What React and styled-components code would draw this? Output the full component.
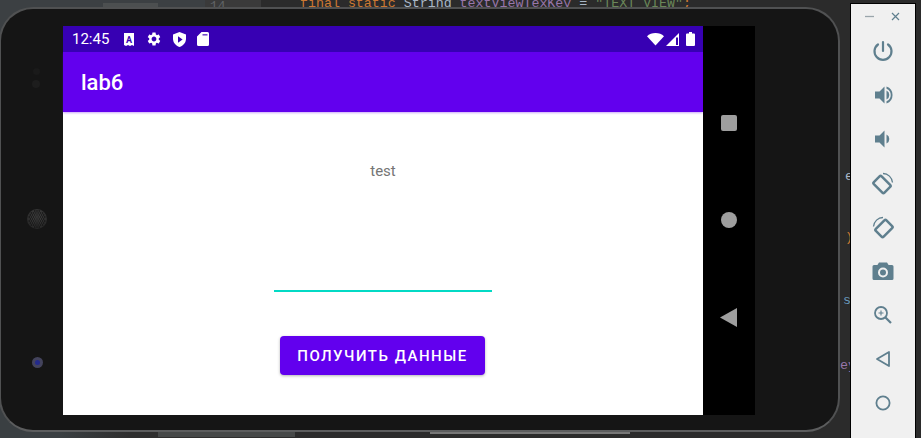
import React from "react"
import styled, { createGlobalStyle } from "styled-components"

const GlobalStyle = createGlobalStyle`
  html, body {
    margin: 0;
    padding: 0;
    background: #2b2b2b;
    overflow: hidden;
  }
`

const Page = styled.div`
  position: relative;
  width: 921px;
  height: 438px;
  overflow: hidden;
  display: flex;
  font-family: Roboto, "Liberation Sans", sans-serif;
`

const ProjectPane = styled.div`
  width: 205px;
  background:
    linear-gradient(to bottom, #3c4043 0 50%, transparent 50%),
    linear-gradient(to right, #3a3f42 60px, #2e2e2e 130px);
`

const Gutter = styled.div`
  width: 56px;
  background: linear-gradient(to bottom, #3a3a3a 0 50%, #2e2e2e 50%);
  box-sizing: border-box;
  font: 13px/13px "Liberation Mono", monospace;
  color: #606366;
  padding-left: 5px;
`

const Code = styled.div`
  flex: 1;
  background: #2b2b2b;
  font: 13.3px/13px "Liberation Mono", monospace;
  color: #a9b7c6;
  white-space: pre;
  overflow: hidden;
`

const CodeLine = styled.div`
  margin-top: -3px;
  padding-left: 39px;
`

const Keyword = styled.span`
  color: #cc7832;
`

const Field = styled.span`
  color: #9876aa;
`

const Str = styled.span`
  color: #6a8759;
`

const Peek = styled.span`
  position: absolute;
  left: ${p => p.$x}px;
  top: ${p => p.$y}px;
  font: 13.3px/14px "Liberation Mono", monospace;
  color: ${p => p.$color};
`

const Key = styled.div`
  position: absolute;
  left: ${p => p.$x}px;
  top: ${p => p.$y}px;
  width: ${p => p.$w}px;
  height: ${p => p.$h}px;
  background: ${p => p.$bg};
`

const Device = styled.div`
  position: absolute;
  left: -1px;
  top: 7px;
  width: 841px;
  height: 425px;
  box-sizing: border-box;
  padding: 17px 0 0 62px;
  display: flex;
  align-items: flex-start;
  background: #151515;
  border: 2px solid #505152;
  border-bottom-color: #5c5d5e;
  border-radius: 34px;
`

const Screen = styled.div`
  width: 640px;
  height: 389px;
  display: flex;
  flex-direction: column;
  background: #fff;
`

const StatusBar = styled.div`
  height: 26px;
  flex: none;
  display: flex;
  align-items: center;
  padding: 0 8px 0 9px;
  background: #3700b3;
  color: #fff;
  font-size: 15px;
`

const Clock = styled.span`
  width: 51px;
`

const StatusIcons = styled.div`
  display: flex;
  align-items: center;
  gap: ${p => p.$gap}px;
  margin-left: ${p => (p.$right ? "auto" : 0)};
`

const BatterySlot = styled.span`
  display: flex;
  margin-left: 4px;
`

const AppBar = styled.div`
  height: 60px;
  flex: none;
  display: flex;
  align-items: center;
  padding-left: 18px;
  background: #6200ee;
  color: #fff;
  font-size: 22px;
  font-weight: 500;
  box-shadow: 0 1px 2px rgba(98, 0, 238, 0.35);
`

const Content = styled.div`
  flex: 1;
  display: flex;
  flex-direction: column;
  align-items: center;
  padding-top: 50px;
`

const Label = styled.div`
  font-size: 15px;
  line-height: 18px;
  color: #757575;
`

const Input = styled.div`
  width: 218px;
  height: 2px;
  margin-top: 110px;
  background: #03dac5;
`

const Button = styled.button`
  width: 205px;
  height: 39px;
  margin: 44px 1px 0 0;
  padding: 1px 0 0;
  border: 0;
  border-radius: 4px;
  background: #6200ee;
  color: #fff;
  font-family: Roboto, "Liberation Sans", sans-serif;
  font-size: 15px;
  font-weight: 500;
  letter-spacing: 1.5px;
  white-space: nowrap;
  box-shadow: 0 1px 3px rgba(0, 0, 0, 0.3);
`

const NavBar = styled.div`
  width: 52px;
  height: 389px;
  background: #000;
  display: flex;
  flex-direction: column;
  align-items: center;
  padding-top: 89px;
  box-sizing: border-box;
  gap: 73px;
`

const NavSquare = styled.div`
  width: 16px;
  height: 16px;
  border-radius: 2px;
  background: #9e9e9e;
`

const NavCircle = styled.div`
  width: 16px;
  height: 16px;
  margin-top: 8px;
  border-radius: 50%;
  background: #9e9e9e;
`

const NavBack = styled.svg`
  margin-top: 7px;
`

const Hole = styled.div`
  position: absolute;
  left: ${p => p.$x - p.$size / 2 - 1}px;
  top: ${p => p.$y - p.$size / 2 - 9}px;
  width: ${p => p.$size}px;
  height: ${p => p.$size}px;
  border-radius: 50%;
  background: ${p => p.$bg};
`

const SpeakerWrap = styled.svg`
  position: absolute;
  left: 26px;
  top: 200px;
`

const Sidebar = styled.div`
  position: absolute;
  left: 850px;
  top: 3px;
  width: 66px;
  height: 435px;
  box-sizing: border-box;
  display: flex;
  flex-direction: column;
  align-items: center;
  background: #f0f0f0;
  border: 1px solid #000;
  border-bottom: 0;
`

const SideHeader = styled.div`
  height: 25px;
  width: 100%;
  flex: none;
  display: flex;
  align-items: center;
  justify-content: center;
  gap: 17px;
  padding-right: 1px;
  box-sizing: border-box;
`

const SideButton = styled.div`
  width: 100%;
  height: 44px;
  flex: none;
  display: flex;
  align-items: center;
  justify-content: center;
`

const slate = "#5f7f8e"

function Speaker() {
  const dots = []
  for (let row = -4; row <= 4; row++) {
    for (let col = -4; col <= 4; col++) {
      const x = col * 2.200 + (row % 2 ? 1.100 : 0)
      const y = row * 2
      if (x * x + y * y < 75) dots.push(<circle key={row + "_" + col} cx={10 + x} cy={10 + y} r="0.800" fill="#111" />)
    }
  }
  return (
    <SpeakerWrap width="20" height="20" viewBox="0 0 20 20">
      <defs>
        <radialGradient id="speakerFill" cx="50%" cy="40%" r="60%">
          <stop offset="0%" stopColor="#4a4a4a" />
          <stop offset="100%" stopColor="#252525" />
        </radialGradient>
      </defs>
      <circle cx="10" cy="10" r="10" fill="url(#speakerFill)" />
      {dots}
    </SpeakerWrap>
  )
}

function Gear() {
  return (
    <svg width="16" height="16" viewBox="0 0 24 24" fill="#fff">
      <path d="M19.14 12.94c.04-.3.06-.61.06-.94 0-.32-.02-.64-.07-.94l2.03-1.58c.18-.14.23-.41.12-.61l-1.92-3.32c-.12-.22-.37-.29-.59-.22l-2.39.96c-.5-.38-1.03-.7-1.62-.94l-.36-2.54c-.04-.24-.24-.41-.48-.41h-3.84c-.24 0-.43.17-.47.41l-.36 2.54c-.59.24-1.13.57-1.62.94l-2.39-.96c-.22-.08-.47 0-.59.22L2.74 8.87c-.12.21-.08.47.12.61l2.03 1.58c-.05.3-.09.63-.09.94s.02.64.07.94l-2.03 1.58c-.18.14-.23.41-.12.61l1.92 3.32c.12.22.37.29.59.22l2.39-.96c.5.38 1.03.7 1.62.94l.36 2.54c.05.24.24.41.48.41h3.84c.24 0 .44-.17.47-.41l.36-2.54c.59-.24 1.13-.56 1.62-.94l2.39.96c.22.08.47 0 .59-.22l1.92-3.32c.12-.22.07-.47-.12-.61l-2.01-1.58zM12 15.6c-1.98 0-3.6-1.62-3.6-3.6s1.62-3.6 3.6-3.6 3.6 1.62 3.6 3.6-1.62 3.6-3.6 3.6z" />
    </svg>
  )
}

function FontIcon() {
  return (
    <svg width="12" height="13" viewBox="0 0 12 13">
      <path d="M1 0h10v13l-2-1-2 1-2-1-2 1-2-1z" fill="#fff" />
      <text x="6" y="9.500" textAnchor="middle" fontSize="9" fontWeight="700" fontFamily="Roboto" fill="#3700b3">
        A
      </text>
    </svg>
  )
}

function ShieldPlay() {
  return (
    <svg width="13" height="15" viewBox="0 0 13 15">
      <path d="M6.500 0 13 2.400v4.400c0 3.700-2.700 7-6.500 8.200C2.700 13.800 0 10.500 0 6.800V2.400z" fill="#fff" />
      <path d="M5 4.300 9.600 7.500 5 10.700z" fill="#3700b3" />
    </svg>
  )
}

function SdCard() {
  return (
    <svg width="12" height="14" viewBox="0 0 12 14">
      <path d="M4.500 0H10.500A1.500 1.500 0 0 1 12 1.500v11a1.500 1.500 0 0 1-1.500 1.500h-9A1.500 1.500 0 0 1 0 12.500V4.500z" fill="#fff" />
      <path d="M5.500 2h5v1.600h-5z" fill="#3700b3" opacity="0.7" />
    </svg>
  )
}

function Wifi() {
  return (
    <svg width="17" height="13" viewBox="0 0 17 13">
      <path d="M8.500 12.500 0 3.200C2.200 1.200 5.200 0 8.500 0s6.300 1.200 8.500 3.200z" fill="#fff" />
    </svg>
  )
}

function Signal() {
  return (
    <svg width="14" height="13" viewBox="0 0 14 13">
      <path d="M0 13 13 0v13z" fill="#fff" />
      <path d="M10 4.500h2V12h-2z" fill="#3700b3" />
    </svg>
  )
}

function Battery() {
  return (
    <svg width="9" height="14" viewBox="0 0 9 14">
      <path d="M3 0h3v1.500h2a1 1 0 0 1 1 1V13a1 1 0 0 1-1 1H1a1 1 0 0 1-1-1V2.500a1 1 0 0 1 1-1h2z" fill="#fff" />
    </svg>
  )
}

function Power() {
  return (
    <svg width="22" height="22" viewBox="0 0 22 22" fill="none" stroke={slate} strokeWidth="2.200">
      <path d="M11 2v9" strokeLinecap="round" />
      <path d="M6 4.500a8.500 8.500 0 1 0 10 0" strokeLinecap="round" />
    </svg>
  )
}

function Volume({ up }) {
  return (
    <svg width="22" height="22" viewBox="0 0 22 22" fill={slate}>
      <path d="M3 7.500h4.500L12.500 2.500v17l-5-5H3z" />
      <path d="M14.500 6.500a5 5 0 0 1 0 9z" />
      {up && <path d="M14.500 2.500a9 9 0 0 1 0 17v-2.200a6.800 6.800 0 0 0 0-12.600z" />}
    </svg>
  )
}

function Rotate({ flip }) {
  return (
    <svg width="24" height="24" viewBox="0 0 24 24" fill="none" stroke={slate} style={flip ? { transform: "scaleX(-1)" } : undefined}>
      <rect x="5.500" y="6" width="11" height="15" rx="1.500" strokeWidth="2.500" transform="rotate(-45 11 13.500)" />
      <path d="M12 2.500c5 0 9 4 9.500 9" strokeWidth="1.300" />
    </svg>
  )
}

function Camera() {
  return (
    <svg width="22" height="20" viewBox="0 0 22 20">
      <path
        fill={slate}
        fillRule="evenodd"
        d="M7 1.500h8l1.600 2.500H20a1.500 1.500 0 0 1 1.500 1.500v12a1.500 1.500 0 0 1-1.500 1.500H2a1.500 1.500 0 0 1-1.500-1.500v-12A1.500 1.500 0 0 1 2 4h3.400zM11 6.500a5 5 0 1 0 0 10 5 5 0 0 0 0-10zM11 8.500a3 3 0 1 1 0 6 3 3 0 0 1 0-6z"
      />
    </svg>
  )
}

function ZoomIn() {
  return (
    <svg width="20" height="20" viewBox="0 0 20 20" fill="none" stroke={slate}>
      <circle cx="8" cy="8" r="6" strokeWidth="1.800" />
      <path d="M12.500 12.500 18 18" strokeWidth="2.200" />
      <path d="M5.500 8h5M8 5.500v5" strokeWidth="1.100" />
    </svg>
  )
}

function Back() {
  return (
    <svg width="16" height="18" viewBox="0 0 16 18" fill="none" stroke={slate} strokeWidth="1.800">
      <path d="M14 2v14L2 9z" strokeLinejoin="round" />
    </svg>
  )
}

function Home() {
  return (
    <svg width="16" height="16" viewBox="0 0 16 16" fill="none" stroke={slate} strokeWidth="1.800">
      <circle cx="8" cy="8" r="6.600" />
    </svg>
  )
}

export default function App() {
  return (
    <Page>
      <GlobalStyle />
      <ProjectPane />
      <Gutter>14</Gutter>
      <Code>
        <CodeLine>
          <Keyword>final static </Keyword>String <Field>textViewTexKey</Field> = <Str>"TEXT_VIEW"</Str>
          <Keyword>;</Keyword>
        </CodeLine>
      </Code>
      <Peek $x={845} $y={170} $color="#a9b7c6">e</Peek>
      <Peek $x={845} $y={231} $color="#cc7832">)</Peek>
      <Peek $x={843} $y={294} $color="#6897bb">s</Peek>
      <Peek $x={840} $y={359} $color="#9876aa">ey</Peek>
      <Key $x={103} $y={3} $w={55} $h={5} $bg="#4c4f50" />
      <Key $x={158} $y={431} $w={137} $h={6} $bg="#464848" />
      <Key $x={430} $y={432} $w={200} $h={2} $bg="#777" />
      <Device>
        <Hole $x={36} $y={71} $size={7} $bg="#1a1a1a" />
        <Hole $x={36} $y={84} $size={8} $bg="#1d1d1d" />
        <Speaker />
        <Hole $x={37} $y={362} $size={11} $bg="#43435c" />
        <Hole $x={37} $y={362} $size={5} $bg="#232a8c" />
        <Screen>
          <StatusBar>
            <Clock>12:45</Clock>
            <StatusIcons $gap={11}>
              <FontIcon />
              <Gear />
              <ShieldPlay />
              <SdCard />
            </StatusIcons>
            <StatusIcons $gap={2} $right>
              <Wifi />
              <Signal />
              <BatterySlot>
                <Battery />
              </BatterySlot>
            </StatusIcons>
          </StatusBar>
          <AppBar>lab6</AppBar>
          <Content>
            <Label>test</Label>
            <Input />
            <Button>ПОЛУЧИТЬ ДАННЫЕ</Button>
          </Content>
        </Screen>
        <NavBar>
          <NavSquare />
          <NavCircle />
          <NavBack width="18" height="19" viewBox="0 0 18 19">
            <path d="M17 0v19L0 9.500z" fill="#9e9e9e" />
          </NavBack>
        </NavBar>
      </Device>
      <Sidebar>
        <SideHeader>
          <svg width="9" height="9" viewBox="0 0 9 9">
            <path d="M0 4.500h9" stroke="#9aa5ab" strokeWidth="1.300" />
          </svg>
          <svg width="9" height="9" viewBox="0 0 9 9">
            <path d="M1 1l7 7M8 1l-7 7" stroke={slate} strokeWidth="1.200" />
          </svg>
        </SideHeader>
        <SideButton><Power /></SideButton>
        <SideButton><Volume up /></SideButton>
        <SideButton><Volume /></SideButton>
        <SideButton><Rotate /></SideButton>
        <SideButton><Rotate flip /></SideButton>
        <SideButton><Camera /></SideButton>
        <SideButton><ZoomIn /></SideButton>
        <SideButton><Back /></SideButton>
        <SideButton><Home /></SideButton>
      </Sidebar>
    </Page>
  )
}
